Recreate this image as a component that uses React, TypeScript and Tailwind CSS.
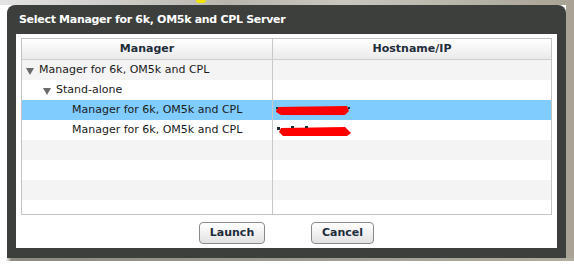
import React from 'react';

const rows = [
  { level: 0, label: 'Manager for 6k, OM5k and CPL', toggle: true },
  { level: 1, label: 'Stand-alone', toggle: true },
  { level: 2, label: 'Manager for 6k, OM5k and CPL', host: 'a', selected: true },
  { level: 2, label: 'Manager for 6k, OM5k and CPL', host: 'b' },
  { level: -1, label: '' },
  { level: -1, label: '' },
  { level: -1, label: '' },
];

const indent = ['pl-[4px]', 'pl-[21px]', 'pl-[50px]'];

function Redacted({ kind }: { kind: string }) {
  // scribbled-out host name
  return kind === 'a' ? (
    <svg width="80" height="14" viewBox="0 0 80 14">
      <path d="M2 4 L72 3 L74 8 L70 12 L6 12 L1 9 Z" fill="#ff0000" />
      <rect x="1" y="4" width="2" height="2" fill="#0b3a4a" />
      <rect x="73" y="4" width="2" height="2" fill="#0b3a4a" />
    </svg>
  ) : (
    <svg width="80" height="14" viewBox="0 0 80 14">
      <path d="M6 5 L70 4 L76 10 L72 13 L8 13 L4 9 Z" fill="#ff0000" />
      <rect x="2" y="4" width="3" height="3" fill="#1b2b33" />
      <rect x="16" y="3" width="3" height="2" fill="#1b2b33" />
      <rect x="30" y="3" width="3" height="2" fill="#1b2b33" />
    </svg>
  );
}

function Caret() {
  return (
    <svg width="8" height="8" viewBox="0 0 8 8" className="mr-[5px] mt-[1px]">
      <path d="M0 1 L8 1 L4 8 Z" fill="#6b6b6b" />
    </svg>
  );
}

export default function App() {
  return (
    <div className="w-[574px] h-[271px] bg-white flex flex-col font-['DejaVu_Sans',Verdana,sans-serif] overflow-hidden">
      <div className="h-[5px] shrink-0 bg-[linear-gradient(90deg,#e4e4e4,#b9b6ae_40%,#c9c6bf_60%,#a8a394)] flex">
        <div className="ml-[196px] w-[10px] h-[3px] bg-[#f2e200] rounded-b-full" />
      </div>
      <div className="flex h-[253px] shrink-0">
        <div className="w-[7px] bg-white" />
        <div className="w-[559px] bg-[#3d3f3d] rounded-t-[8px] flex flex-col px-[9px] pb-[10px]">
          <div className="h-[29px] flex items-center pl-[3px] pt-[1px] text-white text-[11px] font-bold tracking-[-0.3px]">
            Select Manager for 6k, OM5k and CPL Server
          </div>
          <div className="flex-1 bg-white flex flex-col px-[5px] pt-[4px]">
            <div className="h-[177px] border border-[#c4c4c4] flex flex-col overflow-hidden">
              <div className="h-[21px] shrink-0 flex border-b border-[#cfcfcf] bg-[linear-gradient(#ffffff,#eaeaea)] text-[11px] font-bold text-[#1e2d3b]">
                <div className="w-[251px] border-r border-[#c8c8c8] flex items-center justify-center">Manager</div>
                <div className="flex-1 flex items-center justify-center">Hostname/IP</div>
              </div>
              {rows.map((r, i) => (
                <div
                  key={i}
                  className={`h-[20px] shrink-0 flex text-[11px] text-[#1a1a1a] ${
                    r.selected ? 'bg-[#80ccff]' : i % 2 === 0 ? 'bg-[#f4f4f4]' : 'bg-white'
                  }`}
                >
                  <div className={`w-[251px] border-r border-[#c8c8c8] flex items-center ${r.level >= 0 ? indent[r.level] : ''}`}>
                    {r.toggle && <Caret />}
                    {r.label}
                  </div>
                  <div className="flex-1 flex items-center pl-[2px]">
                    {r.host && <Redacted kind={r.host} />}
                  </div>
                </div>
              ))}
              <div className="flex-1 flex bg-white">
                <div className="w-[251px] border-r border-[#c8c8c8]" />
              </div>
            </div>
            <div className="flex justify-center gap-[46px] pt-[7px]">
              <button className="w-[66px] h-[22px] rounded-[4px] border border-[#8a8a8a] bg-[linear-gradient(#ffffff,#e2e2e2)] text-[11px] font-bold text-[#1e2d3b]">
                Launch
              </button>
              <button className="w-[63px] h-[22px] rounded-[4px] border border-[#8a8a8a] bg-[linear-gradient(#ffffff,#e2e2e2)] text-[11px] font-bold text-[#1e2d3b]">
                Cancel
              </button>
            </div>
          </div>
        </div>
        <div className="flex-1 bg-[#a8a394]" />
      </div>
      <div className="h-[3px] shrink-0 bg-[linear-gradient(90deg,#ffffff_1%,#8d8b80_2%,#9c9a90_50%,#b0ad9f)]" />
    </div>
  );
}
